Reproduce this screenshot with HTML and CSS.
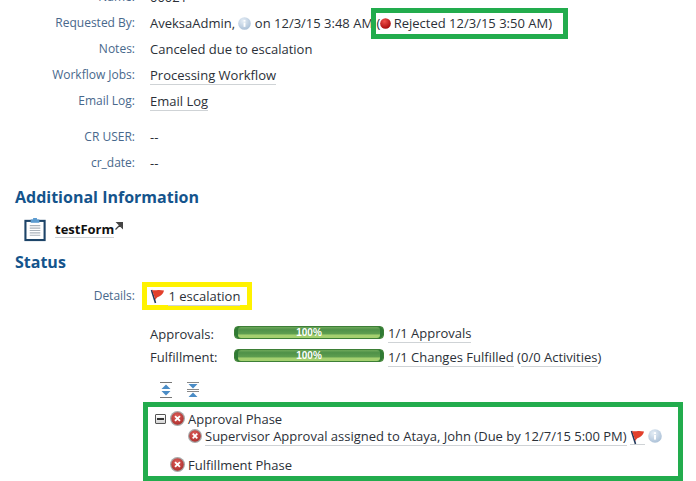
FILE: index.html
```html
<!DOCTYPE html>
<html lang="en">
<head>
    <meta charset="UTF-8">
    <title>Change Request</title>
    <link rel="stylesheet" href="styles.css">
</head>
<body>
    <svg class="defs" width="0" height="0">
        <defs>
            <radialGradient id="infoFill" cx="40%" cy="30%" r="75%">
                <stop offset="0" stop-color="#e6eef6"/>
                <stop offset="1" stop-color="#a9bfd6"/>
            </radialGradient>
            <radialGradient id="redDot" cx="40%" cy="30%" r="70%">
                <stop offset="0" stop-color="#f0504a"/>
                <stop offset="1" stop-color="#a80c0c"/>
            </radialGradient>
            <radialGradient id="errFill" cx="45%" cy="35%" r="70%">
                <stop offset="0" stop-color="#e0605c"/>
                <stop offset="1" stop-color="#a92c2a"/>
            </radialGradient>
            <symbol id="info" viewBox="0 0 14 14">
                <circle cx="7" cy="7" r="6.800" fill="url(#infoFill)"/>
                <rect x="6" y="6" width="2" height="4.600" fill="#fff"/>
                <rect x="6" y="3.200" width="2" height="1.800" fill="#fff"/>
            </symbol>
            <symbol id="err" viewBox="0 0 14 14">
                <circle cx="7" cy="7" r="7" fill="#a8a8a8"/>
                <circle cx="7" cy="7" r="5.800" fill="url(#errFill)"/>
                <path d="M4.700 4.700l4.600 4.600M9.300 4.700l-4.600 4.600" stroke="#fff" stroke-width="1.700"/>
            </symbol>
            <symbol id="flag" viewBox="0 0 15 15">
                <path d="M1.500 1l4 13" stroke="#22385a" stroke-width="1.600" fill="none"/>
                <path d="M2 1C5 2 7 .5 9 1l5 .5C13.500 4 12 6 10 7 8 8 6.500 8 5.500 11z" fill="#e2402c"/>
            </symbol>
        </defs>
    </svg>

    <div class="page">
        <div class="row"><span class="label">Name:</span><span class="value">00021</span></div>
        <div class="row">
            <span class="label">Requested By:</span>
            <span class="value">AveksaAdmin, <svg class="ico-info"><use href="#info"/></svg> on 12/3/15 3:48 AM (<svg class="ico-dot" viewBox="0 0 12 12"><circle cx="6" cy="6" r="5.800" fill="url(#redDot)"/></svg> Rejected 12/3/15 3:50 AM)</span>
            <div class="mark-green mark-rejected"></div>
        </div>
        <div class="row"><span class="label">Notes:</span><span class="value">Canceled due to escalation</span></div>
        <div class="row"><span class="label">Workflow Jobs:</span><span class="value"><a class="link">Processing Workflow</a></span></div>
        <div class="row"><span class="label">Email Log:</span><span class="value"><a class="link">Email Log</a></span></div>
        <div class="row row-gap"><span class="label">CR USER:</span><span class="value">--</span></div>
        <div class="row"><span class="label">cr_date:</span><span class="value">--</span></div>

        <h2 class="heading">Additional Information</h2>
        <div class="form-line">
            <svg class="ico-form" viewBox="0 0 24 25">
                <rect x="1.500" y="3.500" width="20" height="20" fill="#fff" stroke="#1d4468" stroke-width="2.200"/>
                <rect x="7" y="2" width="9" height="3.500" fill="#5b9bd0"/>
                <rect x="9.500" y="0.500" width="4" height="2.500" fill="#5b9bd0"/>
                <path d="M6 8.500h11M6 11h11M6 13.500h11M6 16h11M6 18.500h11" stroke="#aab2ba" stroke-width="1.200"/>
            </svg>
            <a class="link form-link">testForm</a>
            <svg class="ico-ext" viewBox="0 0 8 8"><path d="M2 0.500h5.500V6zM5 3L0.500 7.500" stroke="#444" stroke-width="1.300" fill="#444"/></svg>
        </div>

        <h2 class="heading heading-status">Status</h2>
        <div class="row row-details">
            <span class="label">Details:</span>
            <span class="value mark-yellow"><svg class="ico-flag"><use href="#flag"/></svg> <a class="link">1 escalation</a></span>
        </div>

        <div class="progress-list">
            <div class="progress-row">
                <span class="progress-name">Approvals:</span>
                <div class="bar">100%</div>
                <a class="link">1/1 Approvals</a>
            </div>
            <div class="progress-row">
                <span class="progress-name">Fulfillment:</span>
                <div class="bar">100%</div>
                <span><a class="link">1/1 Changes Fulfilled</a> (<a class="link">0/0 Activities</a>)</span>
            </div>
        </div>

        <div class="tools">
            <svg viewBox="0 0 14 16"><path d="M1 .5h12M1 15.500h12" stroke="#777" stroke-width="1"/><path d="M7 2.500l4.500 4.500h-9zM7 13.500L11.500 9h-9z" fill="#4a8cc6"/></svg>
            <svg viewBox="0 0 14 16"><path d="M1 .5h12M1 7.500h12M1 9.500h12" stroke="#888" stroke-width="1"/><path d="M7 6.500L2.500 2h9zM7 10.500l4.500 4.500h-9z" fill="#4a8cc6"/></svg>
        </div>

        <div class="phases">
            <div class="phase">
                <span class="toggle"></span>
                <svg class="ico-err"><use href="#err"/></svg>
                <span>Approval Phase</span>
            </div>
            <div class="phase phase-child">
                <svg class="ico-err"><use href="#err"/></svg>
                <a class="link">Supervisor Approval assigned to Ataya, John (Due by 12/7/15 5:00 PM)</a>
                <a class="link flag-link"><svg class="ico-flag"><use href="#flag"/></svg></a>
                <svg class="ico-info ico-info-lg"><use href="#info"/></svg>
            </div>
            <div class="phase phase-last">
                <svg class="ico-err"><use href="#err"/></svg>
                <span>Fulfillment Phase</span>
            </div>
        </div>
    </div>
</body>
</html>
```

FILE: styles.css
```css
/* General styles */
html, body {
    height: 481px;
    overflow: hidden;
}

body {
    margin: 0;
    background-color: #fff;
    font-family: "Open Sans", Arial, sans-serif;
    font-size: 13px;
    color: #2b3038;
}

.defs {
    position: absolute;
}

.page {
    margin-top: -16px;
}

/* Label / value rows */
.row {
    display: flex;
    position: relative;
    height: 26px;
    line-height: 26px;
}

.label {
    width: 135px;
    text-align: right;
    font-size: 12px;
    color: #48688c;
    flex: none;
}

.value {
    margin-left: 15px;
    white-space: nowrap;
}

.row-gap {
    margin-top: 10px;
}

.link {
    border-bottom: 1px solid #cfd3d6;
    color: #2b3038;
}

.ico-info {
    width: 13px;
    height: 13px;
    vertical-align: -2px;
}

.ico-dot {
    width: 11px;
    height: 11px;
    margin-right: -1px;
    vertical-align: -1px;
}

/* Review annotations over the screenshot */
.mark-green {
    position: absolute;
    box-sizing: border-box;
    border: 5px solid #22ac4d;
}

.mark-rejected {
    left: 371px;
    top: -2px;
    width: 197px;
    height: 31px;
}

.mark-yellow {
    box-sizing: border-box;
    height: 28px;
    width: 110px;
    margin-left: 7px;
    padding-left: 3px;
    border: 5px solid #fff200;
    line-height: 18px;
}

/* Headings */
.heading {
    margin: 7px 0 0 15px;
    height: 28px;
    line-height: 28px;
    font-size: 16px;
    font-weight: 700;
    color: #14548c;
}

.heading-status {
    margin-top: 2px;
    height: 26px;
    line-height: 26px;
}

.form-line {
    display: flex;
    align-items: center;
    height: 36px;
    padding-left: 24px;
}

.ico-form {
    width: 23px;
    height: 25px;
}

.form-link {
    margin-left: 8px;
    font-weight: 700;
    color: #111;
    line-height: 16px;
}

.ico-ext {
    width: 8px;
    height: 8px;
    margin: -6px 0 0 1px;
}

.row-details {
    height: 28px;
    margin-top: 7px;
    line-height: 28px;
}

.ico-flag {
    width: 15px;
    height: 15px;
    vertical-align: -3px;
}

/* Progress bars */
.progress-list {
    margin: 12px 0 0 150px;
}

.progress-row {
    display: flex;
    align-items: center;
    height: 23px;
}

.progress-name {
    width: 84px;
}

.bar {
    width: 148px;
    height: 11px;
    margin: -2px 4px 0 0;
    border: 1px solid #3d7f36;
    border-radius: 4px;
    background: linear-gradient(#6ea85a 0, #4f9148 25%, #5d9d4f 60%, #a4d06f 75%, #a4d06f 100%);
    box-shadow: inset 3px 0 0 #2f7a34, inset -3px 0 0 #2f7a34;
    color: #fff;
    font-family: "Liberation Sans", Arial, sans-serif;
    font-size: 10px;
    font-weight: 700;
    line-height: 11px;
    text-align: center;
}

.tools {
    display: flex;
    gap: 13px;
    margin: 14px 0 0 159px;
}

.tools svg {
    width: 14px;
    height: 16px;
}

/* Phase tree */
.phases {
    box-sizing: border-box;
    height: 79px;
    margin: 4px 0 0 143px;
    width: 540px;
    padding: 3px 0 0 7px;
    border: 5px solid #22ac4d;
}

.phase {
    display: flex;
    align-items: center;
    height: 17px;
    white-space: nowrap;
}

.phase-child {
    height: 18px;
    padding-left: 33px;
}

.phase-child .ico-err {
    width: 14px;
    height: 14px;
}

.phase-last {
    height: 17px;
    margin-top: 11px;
    padding-left: 15px;
}

.toggle {
    box-sizing: border-box;
    position: relative;
    width: 11px;
    height: 10px;
    margin-right: 4px;
    border: 1px solid #555;
    border-radius: 1px;
    background: linear-gradient(#fff, #d5d5d5);
}

.toggle::after {
    content: "";
    position: absolute;
    left: 1px;
    right: 1px;
    top: 3px;
    height: 2px;
    background-color: #333;
}

.ico-err {
    width: 15px;
    height: 15px;
    margin-right: 3px;
    flex: none;
}

.flag-link {
    margin-left: 3px;
    height: 16px;
}

.ico-info-lg {
    width: 14px;
    height: 14px;
    margin-left: 3px;
}
```
